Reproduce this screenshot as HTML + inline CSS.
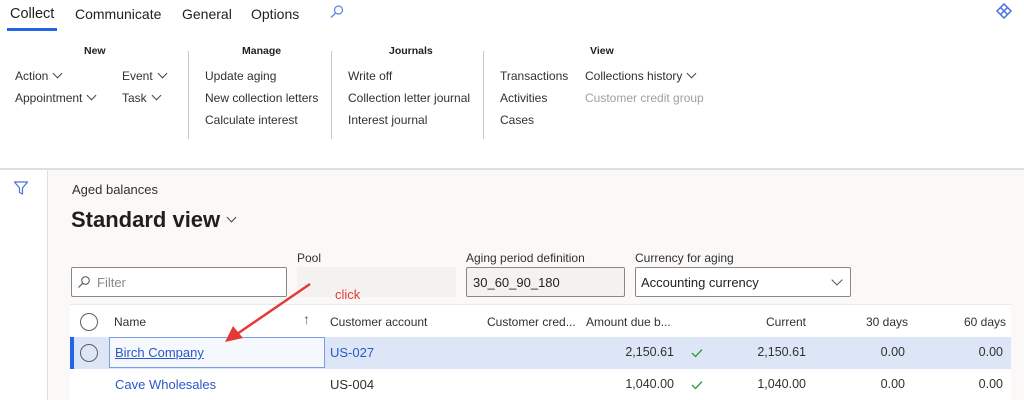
<!DOCTYPE html>
<html><head><meta charset="utf-8"><style>
*{margin:0;padding:0;box-sizing:border-box}
body{width:1024px;height:400px;overflow:hidden;font-family:"Liberation Sans",sans-serif;background:#fff;position:relative;color:#323130}
.a{position:absolute;white-space:nowrap}
.t{font-size:14px;color:#201f1e}
.s{font-size:12px;color:#323130}
.h{font-size:10.5px;font-weight:bold;color:#201f1e}
.vl{position:absolute;width:1px;background:#c8c6c4}
.chev{display:inline-block;width:7px;height:7px;border-right:1.2px solid #444;border-bottom:1.2px solid #444;transform:rotate(45deg);margin-left:6px;position:relative;top:-3px}
.lbl{font-size:12px;color:#323130}
.num{font-size:12.5px;color:#323130;text-align:right}
</style></head><body>
<div class="a t" style="left:10px;top:6px;font-size:14.5px">Collect</div>
<div class="a" style="left:7px;top:28px;width:50px;height:3px;background:#2266e3"></div>
<div class="a t" style="left:75px;top:6px">Communicate</div>
<div class="a t" style="left:182px;top:6px">General</div>
<div class="a t" style="left:251px;top:6px">Options</div>
<svg class="a" style="left:329px;top:4px" width="16" height="16" viewBox="0 0 16 16"><circle cx="9.5" cy="6" r="4" fill="none" stroke="#5b7fe3" stroke-width="1.2"/><path d="M6.6 8.9L2 13.5" stroke="#5b7fe3" stroke-width="1.3"/></svg>
<svg class="a" style="left:995px;top:3px" width="18" height="18" viewBox="0 0 18 18"><path d="M9 1L16 8 9 15 2 8Z M5.5 4.5L12.5 11.5 M12.5 4.5L5.5 11.5" fill="none" stroke="#4a6fe0" stroke-width="1.5"/></svg>

<div class="a h" style="left:84px;top:45px">New</div>
<div class="a s" style="left:15px;top:69px">Action<span class="chev"></span></div>
<div class="a s" style="left:122px;top:69px">Event<span class="chev"></span></div>
<div class="a s" style="left:15px;top:91px">Appointment<span class="chev"></span></div>
<div class="a s" style="left:122px;top:91px">Task<span class="chev"></span></div>
<div class="vl" style="left:188px;top:51px;height:88px"></div>
<div class="a h" style="left:242px;top:45px">Manage</div>
<div class="a s" style="left:205px;top:69px">Update aging</div>
<div class="a s" style="left:205px;top:91px">New collection letters</div>
<div class="a s" style="left:205px;top:113px">Calculate interest</div>
<div class="vl" style="left:331px;top:51px;height:88px"></div>
<div class="a h" style="left:389px;top:45px">Journals</div>
<div class="a s" style="left:348px;top:69px">Write off</div>
<div class="a s" style="left:348px;top:91px">Collection letter journal</div>
<div class="a s" style="left:348px;top:113px">Interest journal</div>
<div class="vl" style="left:483px;top:51px;height:88px"></div>
<div class="a h" style="left:590px;top:45px">View</div>
<div class="a s" style="left:500px;top:69px">Transactions</div>
<div class="a s" style="left:500px;top:91px">Activities</div>
<div class="a s" style="left:500px;top:113px">Cases</div>
<div class="a s" style="left:585px;top:69px">Collections history<span class="chev"></span></div>
<div class="a s" style="left:585px;top:91px;color:#a19f9d">Customer credit group</div>

<div class="a" style="left:0;top:168px;width:1024px;height:2px;background:#e1dfdd"></div>
<div class="a" style="left:47px;top:170px;width:977px;height:230px;background:#faf9f8;border-left:1px solid #e1dfdd"></div>
<svg class="a" style="left:13px;top:180px" width="16" height="16" viewBox="0 0 16 16"><path d="M1.5 2h13L9.5 8v6L6.5 12.5V8Z" fill="none" stroke="#4a6fe0" stroke-width="1.2" stroke-linejoin="round"/></svg>
<div class="a" style="left:72px;top:182px;font-size:13px;color:#323130">Aged balances</div>
<div class="a" style="left:71px;top:207px;font-size:22px;color:#201f1e;font-weight:600">Standard view</div>
<div class="a" style="left:228px;top:214px;width:7px;height:7px;border-right:1.2px solid #444;border-bottom:1.2px solid #444;transform:rotate(45deg)"></div>

<div class="a lbl" style="left:297px;top:251px">Pool</div>
<div class="a lbl" style="left:466px;top:251px">Aging period definition</div>
<div class="a lbl" style="left:635px;top:251px">Currency for aging</div>
<div class="a" style="left:71px;top:267px;width:216px;height:30px;background:#fff;border:1px solid #8a8886;border-radius:2px"></div>
<svg class="a" style="left:77px;top:275px" width="14" height="14" viewBox="0 0 14 14"><circle cx="8.5" cy="5.5" r="3.8" fill="none" stroke="#605e5c" stroke-width="1.1"/><path d="M5.8 8.2L1.5 12.5" stroke="#605e5c" stroke-width="1.2"/></svg>
<div class="a" style="left:97px;top:275px;font-size:13px;color:#8a8886">Filter</div>
<div class="a" style="left:297px;top:267px;width:159px;height:30px;background:#f3f2f1"></div>
<div class="a" style="left:466px;top:267px;width:159px;height:30px;background:#f3f2f1;border:1px solid #8a8886;border-radius:2px"></div>
<div class="a" style="left:473px;top:275px;font-size:13px;color:#201f1e">30_60_90_180</div>
<div class="a" style="left:635px;top:267px;width:216px;height:30px;background:#fff;border:1px solid #8a8886;border-radius:2px"></div>
<div class="a" style="left:641px;top:275px;font-size:13px;color:#201f1e">Accounting currency</div>
<div class="a" style="left:833px;top:276px;width:8px;height:8px;border-right:1.2px solid #555;border-bottom:1.2px solid #555;transform:rotate(45deg)"></div>

<div class="a" style="left:70px;top:304px;width:941px;height:96px;background:#fff;border-top:1px solid #edebe9"></div>
<div class="a" style="left:80px;top:313px;width:18px;height:18px;border:1px solid #605e5c;border-radius:50%"></div>
<div class="a lbl" style="left:114px;top:315px;color:#323130">Name</div>
<div class="a" style="left:303px;top:311px;font-size:14px;color:#605e5c">↑</div>
<div class="a lbl" style="left:330px;top:315px">Customer account</div>
<div class="a lbl" style="left:487px;top:315px">Customer cred...</div>
<div class="a lbl" style="left:586px;top:315px">Amount due b...</div>
<div class="a lbl" style="left:766px;top:315px">Current</div>
<div class="a lbl" style="left:866px;top:315px">30 days</div>
<div class="a lbl" style="left:964px;top:315px">60 days</div>

<div class="a" style="left:70px;top:337px;width:941px;height:32px;background:#dce6f7"></div>
<div class="a" style="left:70px;top:337px;width:4px;height:32px;background:#2266e3"></div>
<div class="a" style="left:80px;top:344px;width:18px;height:18px;border:1px solid #605e5c;border-radius:50%"></div>
<div class="a" style="left:109px;top:337px;width:216px;height:31px;border:1px solid #7a9be6;background:#f5f8fd"></div>
<div class="a" style="left:115px;top:345px;font-size:13px;color:#2b57c7;text-decoration:underline">Birch Company</div>
<div class="a" style="left:330px;top:345px;font-size:13px;color:#2b57c7">US-027</div>
<div class="a num" style="left:574px;top:345px;width:100px">2,150.61</div>
<svg class="a" style="left:691px;top:348px" width="12" height="10" viewBox="0 0 12 10"><path d="M1 5l3.5 3.5L11 1.5" fill="none" stroke="#3a9a4a" stroke-width="1.4"/></svg>
<div class="a num" style="left:706px;top:345px;width:100px">2,150.61</div>
<div class="a num" style="left:805px;top:345px;width:100px">0.00</div>
<div class="a num" style="left:903px;top:345px;width:100px">0.00</div>

<div class="a" style="left:115px;top:377px;font-size:13px;color:#2b57c7">Cave Wholesales</div>
<div class="a" style="left:330px;top:377px;font-size:13px;color:#323130">US-004</div>
<div class="a num" style="left:574px;top:377px;width:100px">1,040.00</div>
<svg class="a" style="left:691px;top:380px" width="12" height="10" viewBox="0 0 12 10"><path d="M1 5l3.5 3.5L11 1.5" fill="none" stroke="#3a9a4a" stroke-width="1.4"/></svg>
<div class="a num" style="left:706px;top:377px;width:100px">1,040.00</div>
<div class="a num" style="left:805px;top:377px;width:100px">0.00</div>
<div class="a num" style="left:903px;top:377px;width:100px">0.00</div>

<div class="a" style="left:335px;top:287px;font-size:13px;color:#e53935">click</div>
<svg class="a" style="left:215px;top:278px" width="100" height="70" viewBox="0 0 100 70"><path d="M95 6L22 56" stroke="#e53935" stroke-width="2.5"/><path d="M10 64L18 48 28 60Z" fill="#e53935"/></svg>
</body></html>
